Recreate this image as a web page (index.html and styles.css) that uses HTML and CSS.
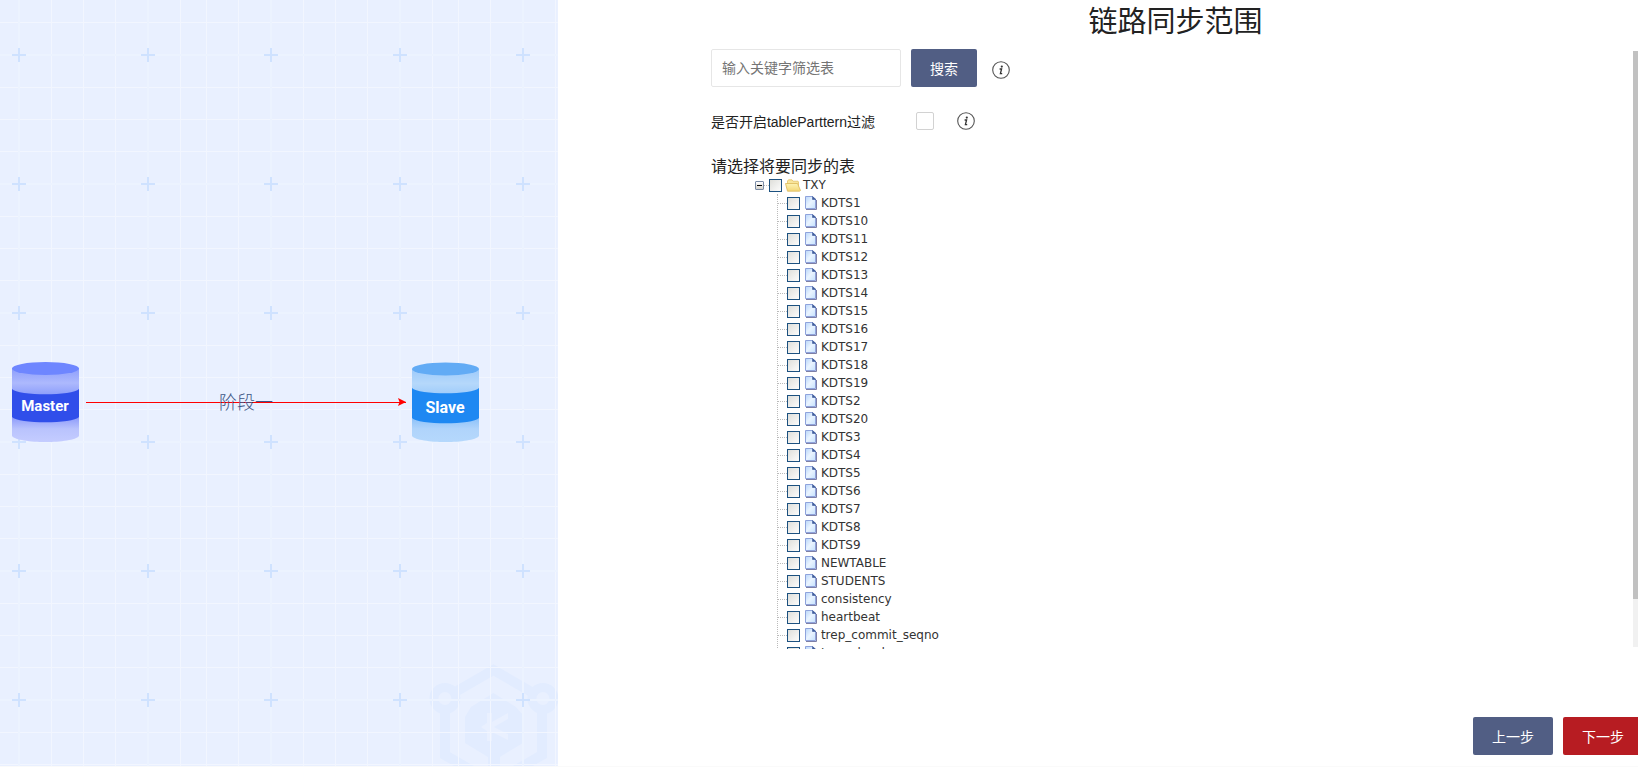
FILE: index.html
```
<!DOCTYPE html>
<html lang="zh-CN">
<head>
    <meta charset="UTF-8">
    <meta name="viewport" content="width=device-width, initial-scale=1.0">
    <title>链路同步范围</title>
    <link rel="stylesheet" href="styles.css">
</head>
<body>
    <svg class="sprite" aria-hidden="true">
        <defs>
            <linearGradient id="paper" x1="0" y1="0" x2="1" y2="1">
                <stop offset="0" stop-color="#b9d6fa"/>
                <stop offset="0.5" stop-color="#eaf4ff"/>
                <stop offset="1" stop-color="#c6e2fd"/>
            </linearGradient>
            <linearGradient id="folderFill" x1="0" y1="0" x2="0" y2="1">
                <stop offset="0" stop-color="#fdf3b4"/>
                <stop offset="1" stop-color="#f3d777"/>
            </linearGradient>
        </defs>
        <symbol id="doc" viewBox="0 0 13 14">
            <path d="M0.500 0.500H7.500L10.500 3.500V12.500H0.500Z" fill="url(#paper)" stroke="#8fa3dc"/>
            <path d="M1 13.500H11.500V4" fill="none" stroke="#7d7fa6"/>
            <path d="M7.500 0.500V3.500H11Z" fill="#3f5c9c" stroke="#3f5c9c" stroke-width="0.600"/>
        </symbol>
        <symbol id="folder" viewBox="0 0 16 13">
            <path d="M2.500 10V2L3.500 0.800H7L8 2.200H13L13.500 3V10Z" fill="#f8e59b" stroke="#e3c266" stroke-width="0.800"/>
            <path d="M0.500 4.500H12.500L15.500 11.500L14.500 12.200H2.500Z" fill="url(#folderFill)" stroke="#dcb95a" stroke-width="0.800"/>
        </symbol>
        <symbol id="info" viewBox="0 0 18 18">
            <circle cx="9" cy="9" r="8.300" fill="none" stroke="#555" stroke-width="1.100"/>
            <circle cx="9.800" cy="5.600" r="1.100" fill="#333"/>
            <path d="M7.600 8H9.600L8.400 12.600H10.200" fill="none" stroke="#333" stroke-width="1.300"/>
        </symbol>
    </svg>

    <main class="page">
        <section class="diagram">
            <svg class="diagram-bg" width="100%" height="100%" aria-hidden="true">
                <defs>
                    <pattern id="grid" width="252" height="129" patternUnits="userSpaceOnUse">
                        <path d="M51 0h1v129h-1zM83 0h1v129h-1zM115 0h1v129h-1zM180 0h1v129h-1zM206 0h1v129h-1zM238 0h1v129h-1zM0 22h252v1H0zM0 87h252v1H0zM0 119h252v1H0z" fill="#f2f6ff"/>
                        <path d="M18 0h2v129h-2zM147 0h2v129h-2zM0 54h252v2H0z" fill="#ecf3ff"/>
                        <path d="M12 54h14v2H12zM18 48h2v14h-2zM141 54h14v2h-14zM147 48h2v14h-2z" fill="#cfe2ff"/>
                    </pattern>
                </defs>
                <rect width="100%" height="100%" fill="#e9f0ff"/>
                <svg x="100%" y="100%" overflow="visible">
                    <g transform="translate(-129 -101)">
                        <path d="M16 33L64.500 5L113 33" fill="none" stroke="#e2ecff" stroke-width="10"/>
                        <path d="M16 42V90L64.500 118L113 90V42" fill="none" stroke="#e2ecff" stroke-width="10"/>
                        <circle cx="16" cy="33.500" r="11" fill="#e9f0ff" stroke="#e2ecff" stroke-width="9"/>
                        <circle cx="114" cy="33.500" r="11" fill="#e9f0ff" stroke="#e2ecff" stroke-width="9"/>
                        <path d="M36 52L42 42L64.500 28L87 42L94 50V78L71 92V101H59V92L36 78Z" fill="#e2ecff"/>
                        <path d="M58 48h5v9l16 -9v6l-14 8l14 7v6l-16 -8v9h-5v-10l-6 -4l6 -4z" fill="#e9f0ff"/>
                    </g>
                </svg>
                <rect width="100%" height="100%" fill="url(#grid)"/>
            </svg>

            <div class="link">
                <svg class="node" viewBox="0 0 67 80" role="img" aria-label="Master">
                    <defs>
                        <linearGradient id="masterTop" x1="0" y1="0" x2="0" y2="1">
                            <stop offset="0" stop-color="#8d9efc"/>
                            <stop offset="0.500" stop-color="#adb9fd"/>
                            <stop offset="1" stop-color="#8496fa"/>
                        </linearGradient>
                        <linearGradient id="masterBottom" x1="0" y1="0" x2="0" y2="1">
                            <stop offset="0" stop-color="#8997fa"/>
                            <stop offset="0.500" stop-color="#b9c3fd"/>
                            <stop offset="1" stop-color="#c4ccff"/>
                        </linearGradient>
                    </defs>
                    <path d="M0 6V36H67V6Z" fill="url(#masterTop)"/>
                    <path d="M0 54V74C6 82 61 82 67 74V54Z" fill="url(#masterBottom)"/>
                    <path d="M0 27C6 34 61 34 67 27V55C61 62 6 62 0 55Z" fill="#304eea"/>
                    <ellipse cx="33.500" cy="6.500" rx="33.500" ry="6.500" fill="#6e86ff"/>
                    <text class="node-text" x="33" y="49">Master</text>
                </svg>
                <div class="line">
                    <span class="line-text">阶段一</span>
                    <svg class="line-head" viewBox="0 0 8 8" aria-hidden="true"><path d="M0 0L8 4L0 8L1.500 4Z" fill="#f00"/></svg>
                </div>
                <svg class="node" viewBox="0 0 67 80" role="img" aria-label="Slave">
                    <defs>
                        <linearGradient id="slaveTop" x1="0" y1="0" x2="0" y2="1">
                            <stop offset="0" stop-color="#9dcafb"/>
                            <stop offset="0.500" stop-color="#b5d8fb"/>
                            <stop offset="1" stop-color="#98c8fa"/>
                        </linearGradient>
                        <linearGradient id="slaveBottom" x1="0" y1="0" x2="0" y2="1">
                            <stop offset="0" stop-color="#86bef9"/>
                            <stop offset="0.500" stop-color="#b0d4fb"/>
                            <stop offset="1" stop-color="#b5d8fc"/>
                        </linearGradient>
                    </defs>
                    <path d="M0 7V36H67V7Z" fill="url(#slaveTop)"/>
                    <path d="M0 54V74C6 82 61 82 67 74V54Z" fill="url(#slaveBottom)"/>
                    <path d="M0 26C6 33 61 33 67 26V56C61 63 6 63 0 56Z" fill="#1e88f2"/>
                    <ellipse cx="33.500" cy="7" rx="33.500" ry="6.500" fill="#62abf5"/>
                    <text class="node-text node-text-large" x="33" y="51">Slave</text>
                </svg>
            </div>
        </section>

        <section class="panel">
            <h1>链路同步范围</h1>
            <div class="scroll-area">
                <form class="content" id="rangeForm">
                    <div class="form-row search-row">
                        <input class="search-input" type="text" placeholder="输入关键字筛选表" aria-label="输入关键字筛选表">
                        <button class="btn" type="button">搜索</button>
                        <svg class="info"><use href="#info"/></svg>
                    </div>
                    <div class="form-row filter-row">
                        <label class="filter-label" for="pattern">是否开启tableParttern过滤</label>
                        <input class="filter-check" type="checkbox" id="pattern">
                        <svg class="info"><use href="#info"/></svg>
                    </div>
                    <h2>请选择将要同步的表</h2>
                    <div class="tree">
                        <div class="tree-root">
                            <button class="toggle" type="button" aria-label="收起"></button>
                            <label><input type="checkbox"><svg class="folder"><use href="#folder"/></svg>TXY</label>
                        </div>
                        <ul>
                            <li><label><input type="checkbox"><svg><use href="#doc"/></svg>KDTS1</label></li>
                            <li><label><input type="checkbox"><svg><use href="#doc"/></svg>KDTS10</label></li>
                            <li><label><input type="checkbox"><svg><use href="#doc"/></svg>KDTS11</label></li>
                            <li><label><input type="checkbox"><svg><use href="#doc"/></svg>KDTS12</label></li>
                            <li><label><input type="checkbox"><svg><use href="#doc"/></svg>KDTS13</label></li>
                            <li><label><input type="checkbox"><svg><use href="#doc"/></svg>KDTS14</label></li>
                            <li><label><input type="checkbox"><svg><use href="#doc"/></svg>KDTS15</label></li>
                            <li><label><input type="checkbox"><svg><use href="#doc"/></svg>KDTS16</label></li>
                            <li><label><input type="checkbox"><svg><use href="#doc"/></svg>KDTS17</label></li>
                            <li><label><input type="checkbox"><svg><use href="#doc"/></svg>KDTS18</label></li>
                            <li><label><input type="checkbox"><svg><use href="#doc"/></svg>KDTS19</label></li>
                            <li><label><input type="checkbox"><svg><use href="#doc"/></svg>KDTS2</label></li>
                            <li><label><input type="checkbox"><svg><use href="#doc"/></svg>KDTS20</label></li>
                            <li><label><input type="checkbox"><svg><use href="#doc"/></svg>KDTS3</label></li>
                            <li><label><input type="checkbox"><svg><use href="#doc"/></svg>KDTS4</label></li>
                            <li><label><input type="checkbox"><svg><use href="#doc"/></svg>KDTS5</label></li>
                            <li><label><input type="checkbox"><svg><use href="#doc"/></svg>KDTS6</label></li>
                            <li><label><input type="checkbox"><svg><use href="#doc"/></svg>KDTS7</label></li>
                            <li><label><input type="checkbox"><svg><use href="#doc"/></svg>KDTS8</label></li>
                            <li><label><input type="checkbox"><svg><use href="#doc"/></svg>KDTS9</label></li>
                            <li><label><input type="checkbox"><svg><use href="#doc"/></svg>NEWTABLE</label></li>
                            <li><label><input type="checkbox"><svg><use href="#doc"/></svg>STUDENTS</label></li>
                            <li><label><input type="checkbox"><svg><use href="#doc"/></svg>consistency</label></li>
                            <li><label><input type="checkbox"><svg><use href="#doc"/></svg>heartbeat</label></li>
                            <li><label><input type="checkbox"><svg><use href="#doc"/></svg>trep_commit_seqno</label></li>
                            <li><label><input type="checkbox"><svg><use href="#doc"/></svg>trep_shard</label></li>
                        </ul>
                    </div>
                </form>
                <div class="scrollbar"><div class="scrollbar-thumb"></div></div>
            </div>
            <div class="footer">
                <button class="btn" type="button">上一步</button>
                <button class="btn btn-red" type="submit" form="rangeForm">下一步</button>
            </div>
        </section>
    </main>
</body>
</html>
```
FILE: styles.css
```
* { box-sizing: border-box; }
body { margin: 0; font-family: "Liberation Sans", "Noto Sans CJK SC", sans-serif; font-size: 14px; color: #222; background: #fff; }
h1, h2 { margin: 0; font-weight: 400; }
.sprite { position: absolute; width: 0; height: 0; }
.page { display: flex; height: 100vh; overflow: hidden; border-bottom: 1px solid #fafafa; }

/* left: link diagram */
.diagram { position: relative; flex: 0 0 calc(34% + 1px); display: flex; align-items: center; padding-left: 12px; padding-top: 38px; }
.diagram-bg { position: absolute; inset: 0; }
.link { position: relative; display: flex; align-items: center; width: 467px; }
.node { flex: none; width: 67px; height: 80px; }
.node-text { font-family: Roboto, sans-serif; font-size: 15px; font-weight: 700; fill: #fff; text-anchor: middle; }
.node-text-large { font-size: 16px; }
.line { position: relative; flex: 1; margin: 0 6px 0 7px; height: 1px; background: #f00; }
.line-text { position: absolute; left: 0; right: 0; top: -12px; font-size: 18px; line-height: 27px; font-weight: 300; text-align: center; color: #3d5585; }
.line-head { position: absolute; right: 0; top: -4px; width: 8px; height: 8px; }

/* right: sync range */
.panel { flex: 1; min-width: 0; display: flex; flex-direction: column; padding-left: 153px; }
h1 { flex: none; height: 49px; padding-left: 2px; font-size: 29px; line-height: 44px; text-align: center; }
.scroll-area { flex: 1; min-height: 0; display: flex; overflow: hidden; }
.content { flex: 1; min-height: 0; overflow: hidden; margin: 0; }
.scrollbar { width: 5px; margin: 2px 0; background: #f1f1f1; }
.scrollbar-thumb { height: 92%; background: #c1c1c1; }
.form-row { display: flex; align-items: center; height: 38px; }
.search-input { width: 190px; height: 38px; margin-right: 10px; padding: 0 10px; border: 1px solid #e6e6e6; border-radius: 2px; font: inherit; }
.search-input::placeholder { color: #757575; }
.btn { height: 38px; padding: 0 19px; border: none; border-radius: 2px; background: #515e84; color: #fff; font: inherit; cursor: pointer; }
.btn-red { background: #b71c22; }
.info { width: 18px; height: 18px; margin-left: 15px; }
.search-row .info { margin-top: 4px; }
.filter-row { margin-top: 15px; }
.filter-label { width: 205px; }
.filter-check { appearance: none; width: 18px; height: 18px; margin: 0; border: 1px solid #d2d2d2; border-radius: 2px; background: #fff; }
.filter-row .info { margin-left: 23px; }
h2 { padding-top: 18px; font-size: 16px; line-height: 18px; }

/* table tree */
.tree { padding-left: 44px; font-family: "DejaVu Sans", sans-serif; font-size: 12px; line-height: 18px; color: #333; }
.tree-root { display: flex; align-items: center; height: 18px; }
.toggle { position: relative; width: 9px; height: 9px; margin-right: 5px; padding: 0; border: 1px solid #7b8ca6; border-radius: 1px; background: linear-gradient(#fff, #d5d2cb); }
.toggle::before { content: ""; position: absolute; left: 1px; top: 3px; width: 5px; height: 1px; background: #000; }
.toggle::after { content: ""; position: absolute; left: 8px; top: 3px; width: 5px; border-top: 1px dotted #bbb; }
.tree label { display: flex; align-items: center; height: 18px; }
.tree input { appearance: none; width: 13px; height: 13px; margin: 0 5px 0 0; border: 1px solid #1c5180; background: linear-gradient(135deg, #dcdcd7, #fff) border-box; }
.tree svg { width: 13px; height: 14px; margin-right: 3px; }
.tree .folder { width: 16px; height: 13px; margin: 0 2px 0 0; }
.tree-root input { margin-right: 3px; }
.tree ul { margin: 0 0 0 22px; padding: 0; list-style: none; border-left: 1px dotted #bbb; }
.tree li { display: flex; align-items: center; height: 18px; }
.tree li::before { content: ""; width: 9px; border-top: 1px dotted #bbb; }

.footer { flex: none; display: flex; justify-content: flex-end; gap: 10px; margin-right: -5px; padding: 68px 0 11px; }
```
